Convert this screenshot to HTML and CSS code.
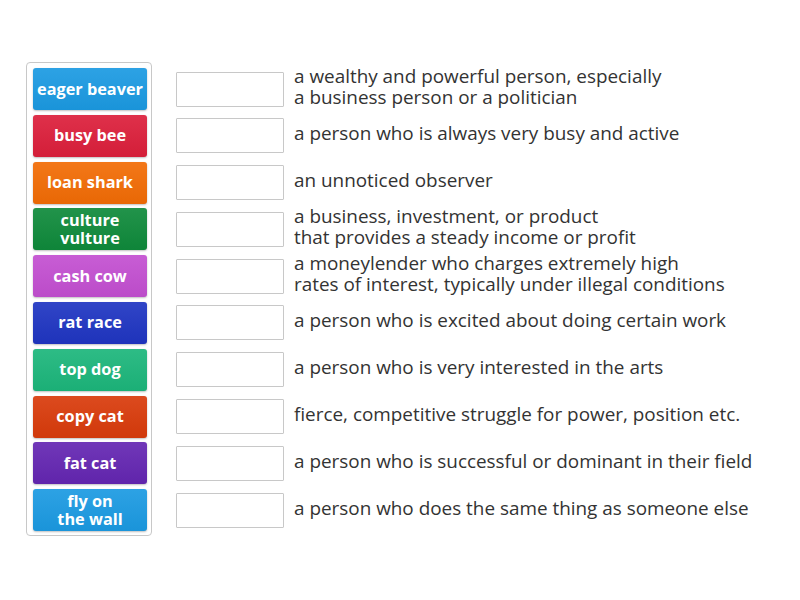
FILE: index.html
```html
<html>
  <head>
    <meta name="viewport" content="width=device-width,initial-scale=1">
    <title>Animal idioms - match up</title>
    <link rel="stylesheet" href="styles.css">
  </head>
  <body>
    <main id="match-up">
        <div id="word-bank">
            <div class="tile blue">eager beaver</div>
            <div class="tile red">busy bee</div>
            <div class="tile orange">loan shark</div>
            <div class="tile green">culture<br>vulture</div>
            <div class="tile magenta">cash cow</div>
            <div class="tile navy">rat race</div>
            <div class="tile teal">top dog</div>
            <div class="tile rust">copy cat</div>
            <div class="tile purple">fat cat</div>
            <div class="tile blue">fly on<br>the wall</div>
        </div>

        <div id="definitions">
            <div class="row">
                <div class="drop"></div>
                <p>a wealthy and powerful person, especially<br>a business person or a politician</p>
            </div>
            <div class="row">
                <div class="drop"></div>
                <p>a person who is always very busy and active</p>
            </div>
            <div class="row">
                <div class="drop"></div>
                <p>an unnoticed observer</p>
            </div>
            <div class="row">
                <div class="drop"></div>
                <p>a business, investment, or product<br>that provides a steady income or profit</p>
            </div>
            <div class="row">
                <div class="drop"></div>
                <p>a moneylender who charges extremely high<br>rates of interest, typically under illegal conditions</p>
            </div>
            <div class="row">
                <div class="drop"></div>
                <p>a person who is excited about doing certain work</p>
            </div>
            <div class="row">
                <div class="drop"></div>
                <p>a person who is very interested in the arts</p>
            </div>
            <div class="row">
                <div class="drop"></div>
                <p>fierce, competitive struggle for power, position etc.</p>
            </div>
            <div class="row">
                <div class="drop"></div>
                <p>a person who is successful or dominant in their field</p>
            </div>
            <div class="row">
                <div class="drop"></div>
                <p>a person who does the same thing as someone else</p>
            </div>
        </div>
    </main>
  </body>
</html>
```

FILE: styles.css
```css
:root {
    --text: #333333;
    --border: #c8c8c8;
    --pitch-gap: 4.8px;
}

html, body {
    margin: 0;
    padding: 0;
    background: #ffffff;
    font-family: "Open Sans", "Liberation Sans", sans-serif;
    color: var(--text);
}

#match-up {
    display: flex;
    align-items: flex-start;
    padding: 62px 0 0 26px;
}

/* Left column: the coloured answer tiles */
#word-bank {
    display: flex;
    flex-direction: column;
    gap: var(--pitch-gap);
    padding: 5px 4px 4px 6px;
    border: 1px solid var(--border);
    border-radius: 4px;
}

.tile {
    width: 114px;
    height: 42px;
    display: flex;
    align-items: center;
    justify-content: center;
    text-align: center;
    border-radius: 3px;
    color: #ffffff;
    font-weight: 700;
    font-size: 16.3px;
    line-height: 18px;
    padding-bottom: 1px;
    box-sizing: border-box;
    box-shadow: 0 1px 2px rgba(0, 0, 0, 0.25);
    background-image: linear-gradient(rgba(255, 255, 255, 0.08), rgba(0, 0, 0, 0.04));
}

.blue    { background-color: #1b9ae2; }
.red     { background-color: #dc1f3b; }
.orange  { background-color: #f26c05; }
.green   { background-color: #0f8a3b; }
.magenta { background-color: #c34fd1; }
.navy    { background-color: #1f35c2; }
.teal    { background-color: #1cb67b; }
.rust    { background-color: #d93b0b; }
.purple  { background-color: #6426b2; }

/* Right column: empty drop boxes with their definitions */
#definitions {
    display: flex;
    flex-direction: column;
    gap: var(--pitch-gap);
    padding-top: 6px;
    margin-left: 24px;
}

.row {
    height: 42px;
    display: flex;
    align-items: center;
}

.drop {
    width: 106px;
    height: 33px;
    border: 1px solid var(--border);
    border-radius: 1px;
    flex-shrink: 0;
}

.row p {
    margin: 0 0 0 10px;
    padding-bottom: 4px;
    font-size: 18.9px;
    line-height: 21px;
    white-space: nowrap;
}
```
